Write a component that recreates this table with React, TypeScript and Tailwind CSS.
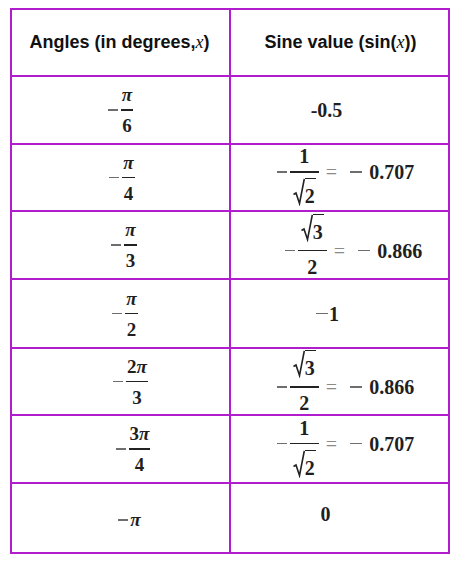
import type { ReactNode } from 'react'

const serif = { fontFamily: '"Liberation Serif", "Times New Roman", serif' }
const line = 'border-[#b11ccc]'

// a minus drawn as a bar so the width matches the TeX one
function Bar({ w = 'w-[10px]' }: { w?: string }) {
  return <span className={`inline-block ${w} h-[1.5px] bg-[#6e6e6e]`} />
}

function Expr({ top, bottom, tail, wide }: { top: ReactNode; bottom: ReactNode; tail?: ReactNode; wide?: boolean }) {
  const pad = wide ? 'px-[3px]' : 'px-[1px]'
  return (
    <span className="inline-grid grid-cols-[auto_auto_auto] grid-rows-[auto_2px_auto]">
      <span className="col-start-1 row-start-2 h-[2px] flex items-center pr-[3px]"><Bar /></span>
      <span className={`col-start-2 row-start-1 justify-self-center leading-none pb-[5px] ${pad}`}>{top}</span>
      <span className="col-start-2 row-start-2 h-[1.5px] bg-[#222] self-center" />
      <span className={`col-start-2 row-start-3 justify-self-center leading-none pt-[5px] ${pad}`}>{bottom}</span>
      {tail && <span className="col-start-3 row-start-2 h-[2px] flex items-center">{tail}</span>}
    </span>
  )
}

function Sqrt({ n }: { n: string }) {
  return (
    <span className="inline-flex items-stretch">
      <svg width="12" height="28" viewBox="0 0 12 28" className="shrink-0">
        <path d="M0.5 16.5 L3 15 L6.5 25.5 L11.3 0.8" fill="none" stroke="#222" strokeWidth="1.6" />
      </svg>
      <span className="border-t-[1.5px] border-[#222] pt-[7px] pr-[1px] leading-none">{n}</span>
    </span>
  )
}

function Eq({ v }: { v: string }) {
  return (
    <span className="inline-flex items-center ml-[7px] whitespace-nowrap">
      <span className="text-[#8a8a8a] font-normal mr-[13px] leading-none">=</span>
      <Bar w="w-[12px]" />
      <span className="ml-[7px] leading-none">{v}</span>
    </span>
  )
}

type Row = { angle: ReactNode; sine: ReactNode; h: string; al: string; sl: string }

const pi = <span className="italic">π</span>

const rows: Row[] = [
  { angle: <Expr top={pi} bottom="6" />, sine: <span>-0.5</span>, h: 'h-[68px]', al: 'pl-0', sl: 'pr-[26px]' },
  { angle: <Expr top={pi} bottom="4" />, sine: <Expr wide top="1" bottom={<Sqrt n="2" />} tail={<Eq v="0.707" />} />, h: 'h-[67px]', al: 'pl-[3px]', sl: 'pl-[12px]' },
  { angle: <Expr top={pi} bottom="3" />, sine: <Expr wide top={<Sqrt n="3" />} bottom="2" tail={<Eq v="0.866" />} />, h: 'h-[68px]', al: 'pl-[7px]', sl: 'pl-[28px]' },
  { angle: <Expr top={pi} bottom="2" />, sine: <span className="inline-flex items-center gap-[1px]"><Bar w="w-[12px]" />1</span>, h: 'h-[69px]', al: 'pl-[9px]', sl: 'pr-[24px]' },
  { angle: <Expr top={<>2{pi}</>} bottom="3" />, sine: <Expr wide top={<Sqrt n="3" />} bottom="2" tail={<Eq v="0.866" />} />, h: 'h-[67px]', al: 'pl-[20px]', sl: 'pl-[12px]' },
  { angle: <Expr top={<>3{pi}</>} bottom="4" />, sine: <Expr wide top="1" bottom={<Sqrt n="2" />} tail={<Eq v="0.707" />} />, h: 'h-[68px]', al: 'pl-[25px]', sl: 'pl-[12px]' },
  { angle: <span className="relative top-[2px] inline-flex items-center gap-[2px]"><Bar />{pi}</span>, sine: <span className="relative -top-[4px]">0</span>, h: 'h-[68px]', al: 'pl-[18px]', sl: 'pr-[28px]' },
]

export default function App() {
  return (
    <div className="w-[459px] h-[564px] bg-white pt-[8px] pl-[10px]">
      <div className={`w-[440px] border-[2.5px] ${line} text-[#1f1f1f]`}>
        <div className={`grid grid-cols-[219px_1fr] h-[67px] border-b-[2.5px] ${line}`} style={{ fontFamily: '"Liberation Sans", Arial, sans-serif' }}>
          <div className={`flex items-center justify-center border-r-[2.5px] ${line} font-bold text-[18px] text-[#111] pr-[2px]`}>
            Angles (in degrees,<span className="italic font-normal" style={serif}>x</span>)
          </div>
          <div className="flex items-center justify-center font-bold text-[18px] text-[#111] pl-[2px]">
            Sine value (sin(<span className="italic font-normal" style={serif}>x</span>))
          </div>
        </div>
        {rows.map((r, i) => (
          <div key={i} className={`grid grid-cols-[219px_1fr] ${r.h} ${i < rows.length - 1 ? `border-b-[2.5px] ${line}` : ''}`} style={serif}>
            <div className={`flex items-center justify-center border-r-[2.5px] ${line} text-[19px] font-bold ${r.al}`}>{r.angle}</div>
            <div className={`flex items-center justify-center text-[20px] font-bold ${r.sl}`}>{r.sine}</div>
          </div>
        ))}
      </div>
    </div>
  )
}
